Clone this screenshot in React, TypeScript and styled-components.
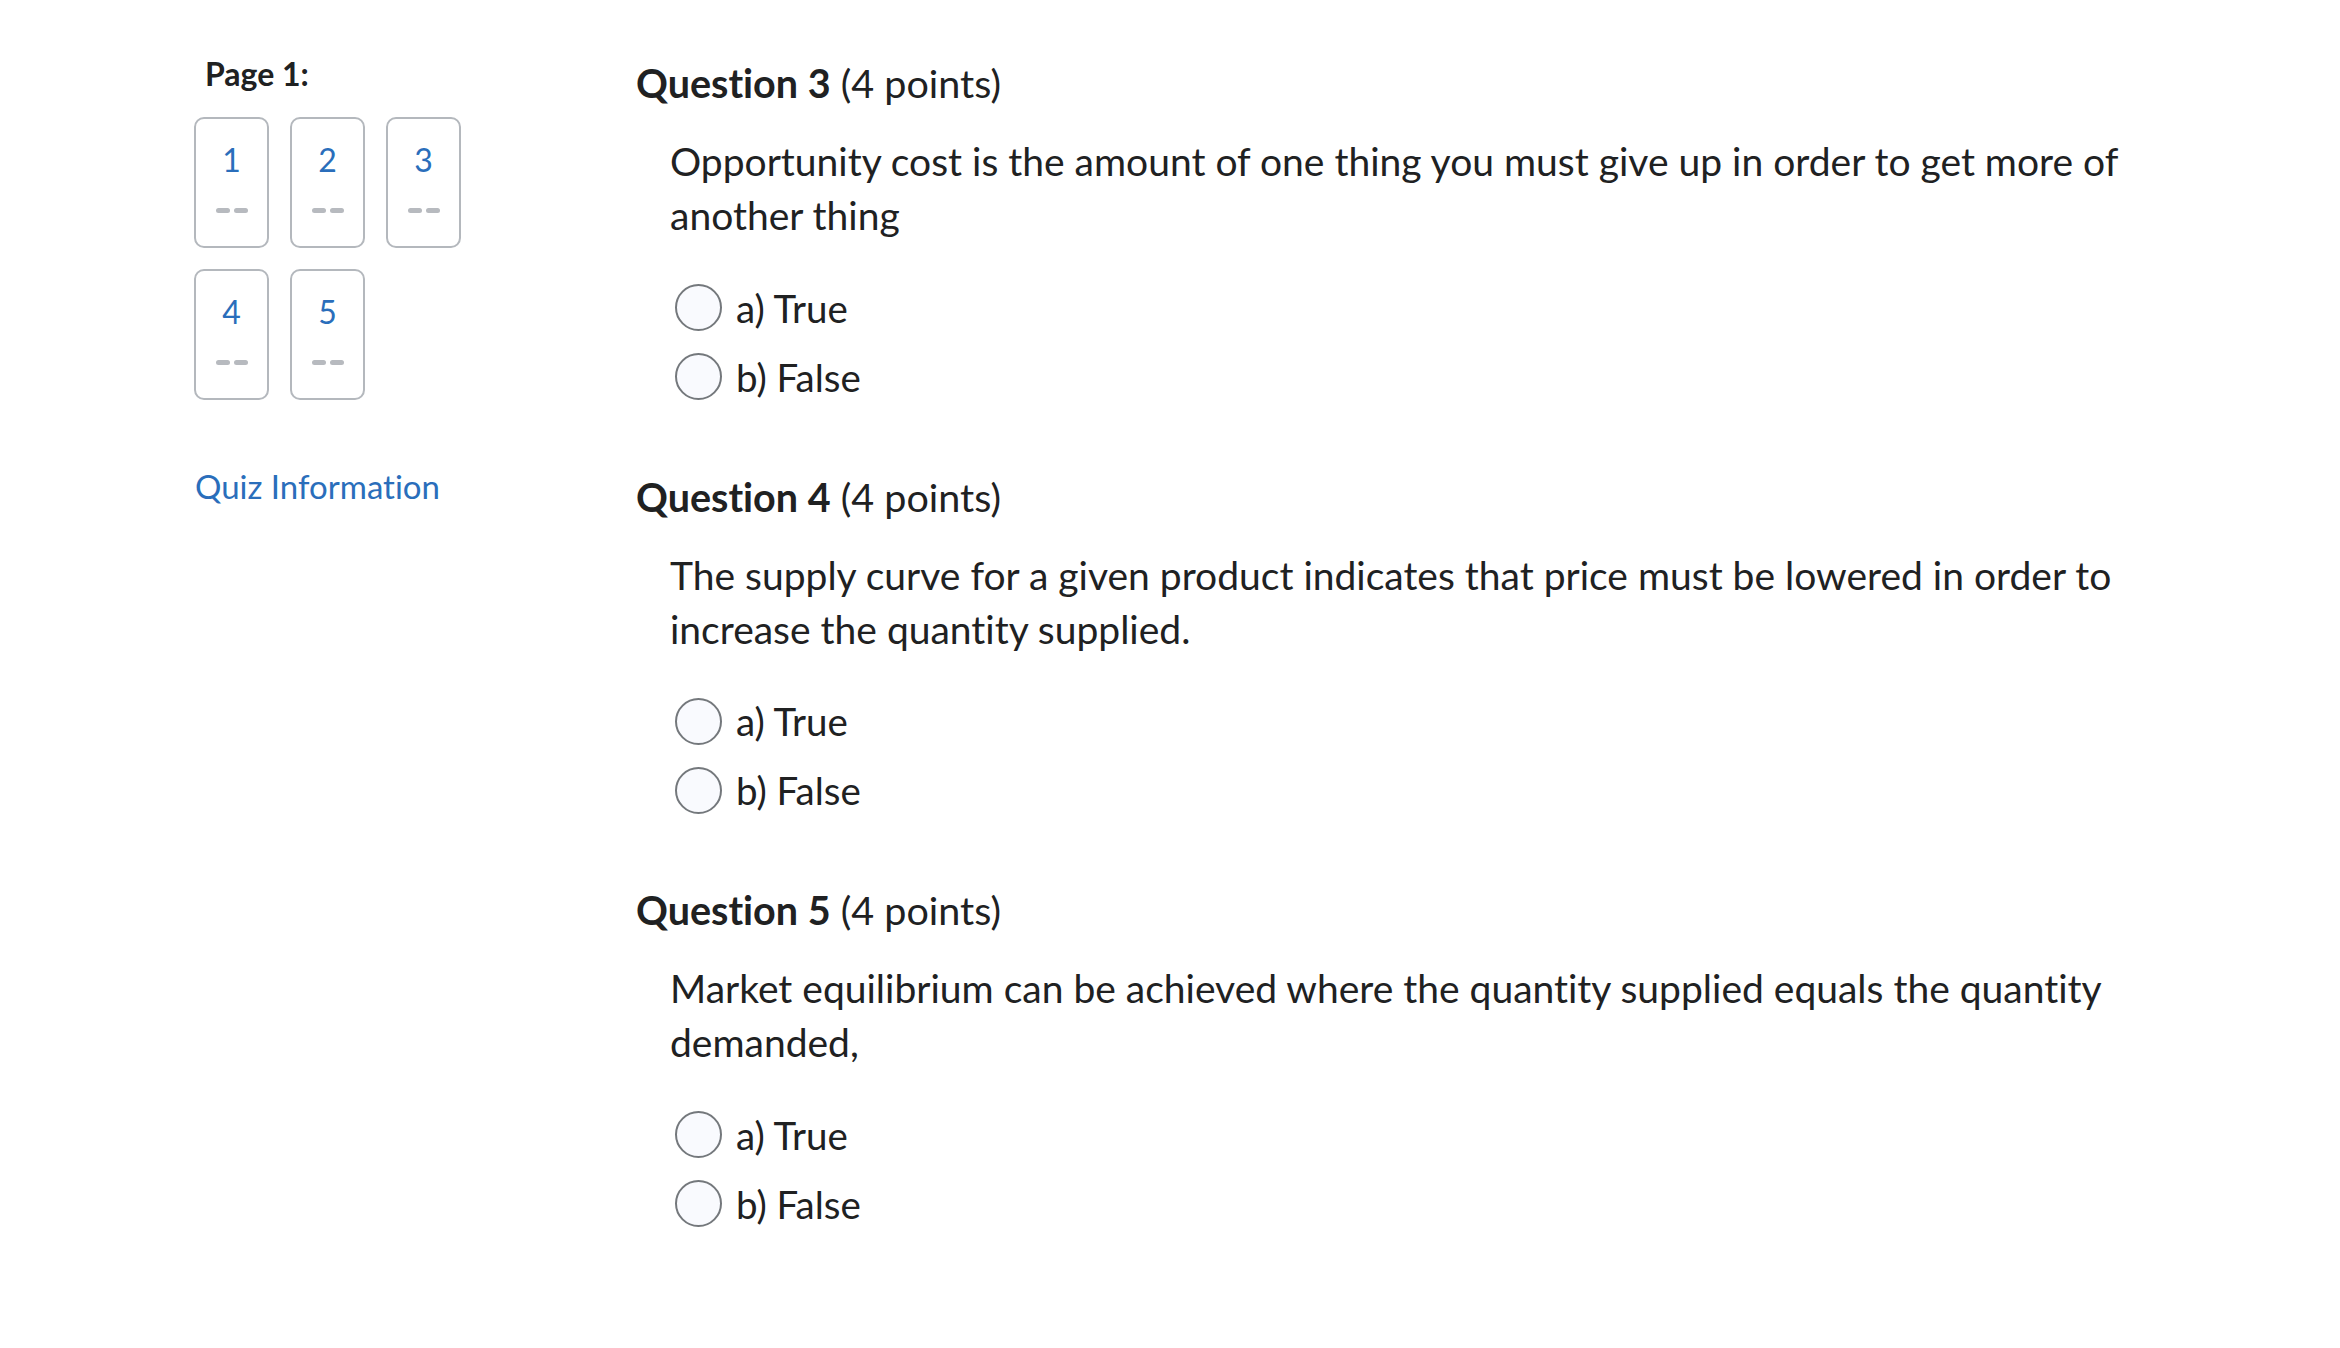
import React from 'react';
import styled, { createGlobalStyle } from 'styled-components';

const GlobalStyle = createGlobalStyle`
  html, body {
    margin: 0;
    padding: 0;
    background: #ffffff;
  }
  body {
    font-family: Lato, "Noto Sans", sans-serif;
    font-variant-ligatures: no-common-ligatures;
    color: #202122;
  }
`;

interface Question {
  number: number;
  points: number;
  text: string;
  options: string[];
}

const questions: Question[] = [
  {
    number: 3,
    points: 4,
    text: 'Opportunity cost is the amount of one thing you must give up in order to get more of another thing',
    options: ['a) True', 'b) False'],
  },
  {
    number: 4,
    points: 4,
    text: 'The supply curve for a given product indicates that price must be lowered in order to increase the quantity supplied.',
    options: ['a) True', 'b) False'],
  },
  {
    number: 5,
    points: 4,
    text: 'Market equilibrium can be achieved where the quantity supplied equals the quantity demanded,',
    options: ['a) True', 'b) False'],
  },
];

const pageTiles = [1, 2, 3, 4, 5];

export default function App() {
  return (
    <>
      <GlobalStyle />
      <Page>
        <Sidebar>
          <PageLabel>Page 1:</PageLabel>
          <TileGrid>
            {pageTiles.map((n) => (
              <Tile key={n} href="#">
                <TileNumber>{n}</TileNumber>
                <Dashes>
                  <Dash />
                  <Dash />
                </Dashes>
              </Tile>
            ))}
          </TileGrid>
          <InfoLink href="#">Quiz Information</InfoLink>
        </Sidebar>
        <Main>
          {questions.map((q) => (
            <QuestionBlock key={q.number}>
              <QuestionTitle>
                <strong>Question {q.number}</strong> ({q.points} points)
              </QuestionTitle>
              <QuestionText>{q.text}</QuestionText>
              <Options>
                {q.options.map((opt) => (
                  <Option key={opt}>
                    <Radio type="radio" name={`q${q.number}`} />
                    <span>{opt}</span>
                  </Option>
                ))}
              </Options>
            </QuestionBlock>
          ))}
        </Main>
      </Page>
    </>
  );
}

const Page = styled.div`
  display: grid;
  grid-template-columns: 442px 1530px;
  padding: 52px 0 0 194px;
`;

const Sidebar = styled.aside`
  display: flex;
  flex-direction: column;
  align-items: flex-start;
`;

const PageLabel = styled.h2`
  margin: 3px 0 24px 11px;
  font-size: 32px;
  line-height: 38px;
  font-weight: 700;
  color: #202122;
`;

const TileGrid = styled.div`
  display: grid;
  grid-template-columns: repeat(3, 75px);
  gap: 21px;
`;

const Tile = styled.a`
  box-sizing: border-box;
  width: 75px;
  height: 131px;
  border: 2px solid #b4b8bd;
  border-radius: 10px;
  display: flex;
  flex-direction: column;
  align-items: center;
  padding-top: 22px;
  text-decoration: none;
  background: #ffffff;
`;

const TileNumber = styled.span`
  font-size: 32px;
  line-height: 38px;
  color: #2a6ebb;
`;

const Dashes = styled.span`
  display: flex;
  gap: 4px;
  margin-top: 29px;
`;

const Dash = styled.span`
  width: 14px;
  height: 5px;
  border-radius: 3px;
  background: #b7babf;
`;

const InfoLink = styled.a`
  margin: 67px 0 0 1px;
  font-size: 33px;
  line-height: 38px;
  color: #2a6ebb;
  text-decoration: none;
`;

const Main = styled.main`
  display: flex;
  flex-direction: column;
  gap: 62.5px;
  padding-top: 8px;
`;

const QuestionBlock = styled.section`
  display: flex;
  flex-direction: column;
`;

const QuestionTitle = styled.h3`
  margin: 0;
  font-size: 39.5px;
  line-height: 46px;
  font-weight: 400;
  color: #202122;

  strong {
    font-weight: 700;
  }
`;

const QuestionText = styled.p`
  margin: 28px 0 0 34px;
  font-size: 39px;
  line-height: 54px;
  color: #202122;
`;

const Options = styled.div`
  display: flex;
  flex-direction: column;
  margin: 31px 0 0 39px;
`;

const Option = styled.label`
  display: flex;
  align-items: center;
  gap: 14px;
  height: 69px;
  font-size: 38.5px;
  color: #202122;
  cursor: pointer;
`;

const Radio = styled.input`
  appearance: none;
  margin: 0;
  box-sizing: border-box;
  width: 47px;
  height: 47px;
  border-radius: 50%;
  border: 2px solid #74787c;
  background: #f9fafe;
  flex-shrink: 0;
`;
